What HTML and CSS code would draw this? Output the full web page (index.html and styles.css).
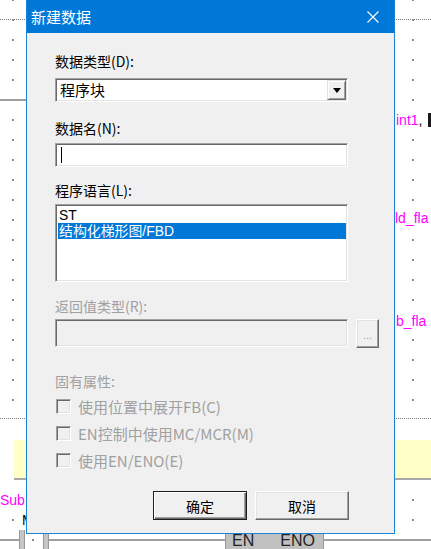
FILE: index.html
```
<!DOCTYPE html>
<html lang="zh-CN">
<head>
<meta charset="utf-8">
<title>新建数据</title>
<link rel="stylesheet" href="styles.css">
</head>
<body>
<div class="desk">
  <div class="dotline dl-top"></div>
  <div class="dotline dl-mid"></div>
  <div class="dots dl-a"></div>
  <div class="dots dl-b"></div>
  <div class="dots dr-a"></div>
  <div class="dots dr-b"></div>
  <div class="dots dr-c"></div>
  <div class="dots dr-d"></div>
  <div class="dots dr-e"></div>
  <div class="dots dot-bottom"></div>
  <div class="rule-gray"></div>
  <div class="note"></div>
  <div class="tag t-int">int1<span class="blk">,</span></div>
  <div class="cursor-bar"></div>
  <div class="tag t-ld">ld_fla</div>
  <div class="tag t-b">b_fla</div>
  <div class="tag t-sub">Sub</div>
  <div class="tag t-m">M</div>
  <div class="wire wire-l"></div>
  <div class="wire wire-r"></div>
  <div class="rail r1"></div>
  <div class="rail r2"></div>
  <div class="fbox"><span>EN</span><span>ENO</span></div>

  <div class="dialog">
    <div class="titlebar">
      <span class="title">新建数据</span>
      <span class="close"><svg width="12" height="12" viewBox="0 0 12 12"><path d="M0.5 0.5L11.5 11.5M11.5 0.5L0.5 11.5" stroke="#fff" stroke-width="1.1" fill="none"/></svg></span>
    </div>
    <div class="body">
      <div class="lbl l1">数据类型(D):</div>
      <div class="field combo"><span class="combo-text">程序块</span><span class="drop"><span class="tri"></span></span></div>
      <div class="lbl l2">数据名(N):</div>
      <div class="field input"><span class="caret"></span></div>
      <div class="lbl l3">程序语言(L):</div>
      <div class="field list">
        <div class="item">ST</div>
        <div class="item sel">结构化梯形图/FBD</div>
      </div>
      <div class="lbl l4 dis">返回值类型(R):</div>
      <div class="ret-row">
        <div class="field dis-field"></div>
        <div class="raised ell">...</div>
      </div>
      <div class="lbl l5 dis">固有属性:</div>
      <div class="checks">
        <div class="chk"><span class="box"></span><span>使用位置中展开FB(C)</span></div>
        <div class="chk"><span class="box"></span><span>EN控制中使用MC/MCR(M)</span></div>
        <div class="chk"><span class="box"></span><span>使用EN/ENO(E)</span></div>
      </div>
      <div class="actions">
        <div class="btn default">确定</div>
        <div class="btn raised">取消</div>
      </div>
    </div>
  </div>
</div>
</body>
</html>
```

FILE: styles.css
```
* { box-sizing: border-box; }
html, body { margin: 0; padding: 0; background: #fff; }

.desk {
  position: relative;
  width: 431px;
  height: 549px;
  overflow: hidden;
  font-family: "Liberation Sans", Arial, sans-serif;
}

/* background canvas (ladder editor behind the dialog) */
.dotline { position: absolute; left: 0; right: 0; height: 0; border-top: 1px dotted #7a7a7a; }
.dl-top { top: 19px; }
.dl-mid { top: 418px; }

.dots {
  position: absolute;
  width: 2px;
  background-image: linear-gradient(#8c8c8c 2px, transparent 2px);
  background-size: 2px 20px;
}
.dl-a { left: 12px; top: -1px; height: 402px; }
.dl-b { left: 12px; top: 519px; height: 2px; }
.dr-a { left: 412px; top: -1px; height: 102px; }
.dr-b { left: 412px; top: 139px; height: 62px; }
.dr-c { left: 412px; top: 239px; height: 62px; }
.dr-d { left: 412px; top: 339px; height: 62px; }
.dr-e { left: 412px; top: 499px; height: 22px; }
.dot-bottom { left: 32px; top: 539px; height: 2px; }

.rule-gray { position: absolute; left: 0; top: 99px; width: 40px; height: 2px; background: #a0a0a0; }

.note {
  position: absolute;
  left: 14px; right: -5px;
  top: 440px; height: 40px;
  background: #ffffc6;
  border-bottom: 2px solid #a8a8a8;
}

.tag { position: absolute; font-size: 14px; line-height: 16px; color: #ff00ff; white-space: nowrap; }
.tag .blk { color: #000; }
.t-int { left: 396px; top: 112px; }
.cursor-bar { position: absolute; left: 428px; top: 113px; width: 3px; height: 14px; background: #1a1a1a; }
.t-ld { left: 395px; top: 210px; }
.t-b { left: 396px; top: 313px; }
.t-sub { left: 0; top: 492px; }
.t-m { left: 22px; top: 512px; color: #000; }

.wire { position: absolute; top: 539px; height: 2px; background: #a0a0a0; }
.wire-l { left: 0; width: 19px; }
.wire-r { left: 49px; right: 0; }

.rail {
  position: absolute;
  top: 530px; height: 30px; width: 6px;
  background: #c6c6c6;
  border-left: 1px solid #9a9a9a;
  border-right: 1px solid #9a9a9a;
}
.r1 { left: 19px; }
.r2 { left: 43px; }

.fbox {
  position: absolute;
  left: 225px; top: 526px;
  width: 99px; height: 30px;
  background: #c0c0c0;
  border: 1px solid #9a9a9a;
  padding: 6px 0 0 6px;
  display: flex;
  gap: 26px;
  font-size: 16px;
  line-height: 16px;
  color: #222;
}

/* dialog window */
.dialog {
  position: absolute;
  left: 26px; top: 0;
  width: 369px; height: 534px;
  background: #f0f0f0;
  border: 1px solid #1a84d8;
  border-top: 0;
  display: flex;
  flex-direction: column;
  font-family: "Noto Sans CJK SC", "Liberation Sans", sans-serif;
}

.titlebar {
  height: 33px;
  background: #0078d7;
  color: #fff;
  display: flex;
  align-items: center;
  flex-shrink: 0;
}
.title { padding-left: 4px; font-size: 15px; line-height: 20px; }
.close {
  margin-left: auto;
  width: 42px; height: 33px;
  display: flex;
  align-items: center;
  justify-content: center;
}

.body {
  flex: 1;
  padding: 19px 0 0 28px;
  display: flex;
  flex-direction: column;
  align-items: flex-start;
}

.lbl { font-size: 14px; line-height: 18px; color: #000; white-space: nowrap; }
.dis { color: #a0a0a0; }

.field {
  width: 293px;
  background: #fff;
  border: 1px solid;
  border-color: #a0a0a0 #fff #fff #a0a0a0;
  box-shadow: inset 1px 1px 0 #696969, inset -1px -1px 0 #e3e3e3;
}

.combo {
  margin-top: 8px;
  height: 24px;
  display: flex;
  align-items: center;
  padding: 0 1px 0 4px;
}
.combo-text { font-size: 15px; line-height: 20px; color: #000; }
.drop {
  margin-left: auto;
  width: 19px; height: 20px;
  background: #f0f0f0;
  border: 1px solid;
  border-color: #e3e3e3 #696969 #696969 #e3e3e3;
  box-shadow: inset 1px 1px 0 #fff, inset -1px -1px 0 #a0a0a0;
  display: flex;
  align-items: center;
  justify-content: center;
}
.tri {
  width: 0; height: 0;
  border-left: 4px solid transparent;
  border-right: 4px solid transparent;
  border-top: 5px solid #000;
  margin-top: 1px;
}

.l2 { margin-top: 17px; }
.input { margin-top: 6px; height: 24px; padding: 3px 0 0 5px; }
.caret { display: block; width: 1px; height: 16px; background: #000; }

.l3 { margin-top: 14px; }
.list { margin-top: 5px; height: 78px; padding: 2px 1px; }
.item {
  font-family: "Liberation Sans", "Noto Sans CJK SC", sans-serif;
  font-size: 13.9px;
  line-height: 16px;
  height: 16px;
  padding-left: 2px;
  color: #000;
  white-space: nowrap;
}
.item.sel { background: #0078d7; color: #fff; margin-left: 1px; padding-left: 1px; }

.l4 { margin-top: 15px; }
.ret-row { margin-top: 4px; display: flex; gap: 8px; align-items: flex-start; }
.dis-field { height: 28px; background: #f0f0f0; }

.raised {
  background: #f0f0f0;
  border: 1px solid;
  border-color: #fff #696969 #696969 #fff;
  box-shadow: inset -1px -1px 0 #a0a0a0, inset 1px 1px 0 #e3e3e3;
}
.ell {
  width: 23px; height: 29px;
  color: #a0a0a0;
  font-size: 11px;
  line-height: 11px;
  display: flex;
  align-items: center;
  justify-content: center;
  padding-top: 3px;
  font-family: "Liberation Sans", sans-serif;
}

.l5 { margin-top: 24px; }
.checks { margin-top: 3px; display: flex; flex-direction: column; }
.chk {
  height: 27px;
  display: flex;
  align-items: center;
  gap: 7px;
  margin-left: 1px;
  font-size: 15px;
  color: #a0a0a0;
  white-space: nowrap;
}
.box {
  width: 15px; height: 15px;
  flex-shrink: 0;
  background: #f0f0f0;
  border: 1px solid;
  border-color: #a0a0a0 #fff #fff #a0a0a0;
  box-shadow: inset 1px 1px 0 #696969, inset -1px -1px 0 #e3e3e3;
}

.actions {
  margin-top: 17px;
  width: 294px;
  display: flex;
  justify-content: flex-end;
  gap: 8px;
}
.btn {
  width: 94px; height: 29px;
  font-size: 14px;
  line-height: 18px;
  color: #000;
  display: flex;
  align-items: center;
  justify-content: center;
}
.btn.default {
  background: #f0f0f0;
  border: 1px solid #1e1e1e;
  box-shadow: inset 1px 1px 0 #fff, inset -1px -1px 0 #696969, inset -2px -2px 0 #a0a0a0;
}
```
